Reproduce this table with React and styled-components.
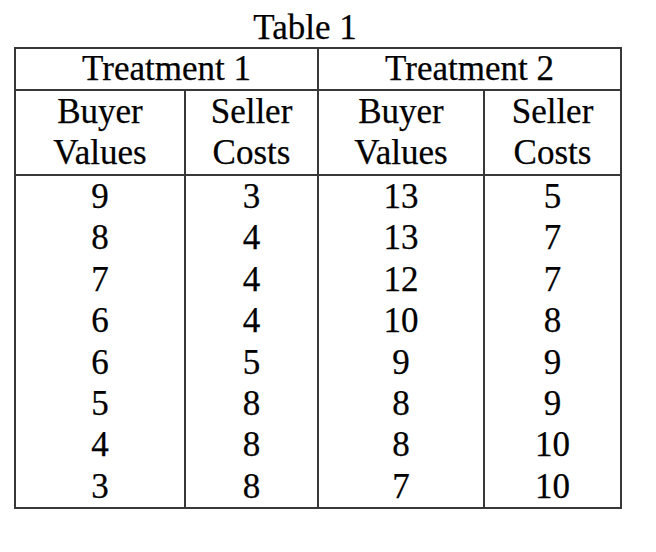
import React from "react";
import styled, { createGlobalStyle } from "styled-components";

const GlobalStyle = createGlobalStyle`
	html, body {
		margin: 0;
		padding: 0;
		background: #fff;
	}
	body {
		font-family: "Liberation Serif", "Times New Roman", serif;
		color: #000;
		-webkit-text-stroke: 0.25px #000;
	}
`;

const treatments = [
	{
		name: "Treatment 1",
		buyers: [9, 8, 7, 6, 6, 5, 4, 3],
		sellers: [3, 4, 4, 4, 5, 8, 8, 8],
	},
	{
		name: "Treatment 2",
		buyers: [13, 13, 12, 10, 9, 8, 8, 7],
		sellers: [5, 7, 7, 8, 9, 9, 10, 10],
	},
];

export default function App() {
	const rows = treatments[0].buyers.map((_, i) => [
		treatments[0].buyers[i],
		treatments[0].sellers[i],
		treatments[1].buyers[i],
		treatments[1].sellers[i],
	]);

	return (
		<Page>
			<GlobalStyle />
			<Title>Table 1</Title>
			<Grid>
				{treatments.map((t, i) => (
					<GroupCell key={t.name} $divider={i > 0}>
						{t.name}
					</GroupCell>
				))}
				{treatments.map((t, i) => (
					<React.Fragment key={t.name + "-head"}>
						<HeadCell $divider={i > 0}>
							Buyer
							<br />
							Values
						</HeadCell>
						<HeadCell $divider>
							Seller
							<br />
							Costs
						</HeadCell>
					</React.Fragment>
				))}
				{rows.map((row, r) =>
					row.map((value, c) => (
						<DataCell key={r + "-" + c} $divider={c > 0} $first={r === 0}>
							{value}
						</DataCell>
					))
				)}
			</Grid>
		</Page>
	);
}

const Page = styled.div`
	padding: 9px 0 0 14px;
	width: 608px;
`;

const Title = styled.div`
	font-size: 35px;
	line-height: 38px;
	text-align: center;
	padding-right: 26px;
`;

const Grid = styled.div`
	display: grid;
	grid-template-columns: 168px 133px 166px 137px;
	border: 2px solid #383838;
	font-size: 35px;
	text-align: center;
`;

const GroupCell = styled.div`
	grid-column: span 2;
	line-height: 40px;
	border-left: ${(p) => (p.$divider ? "2px solid #383838" : "none")};
`;

const HeadCell = styled.div`
	line-height: 41.4px;
	padding-bottom: 0.2px;
	border-top: 2px solid #383838;
	border-left: ${(p) => (p.$divider ? "2px solid #383838" : "none")};
`;

const DataCell = styled.div`
	line-height: 41.4px;
	border-top: ${(p) => (p.$first ? "2px solid #383838" : "none")};
	border-left: ${(p) => (p.$divider ? "2px solid #383838" : "none")};
`;
